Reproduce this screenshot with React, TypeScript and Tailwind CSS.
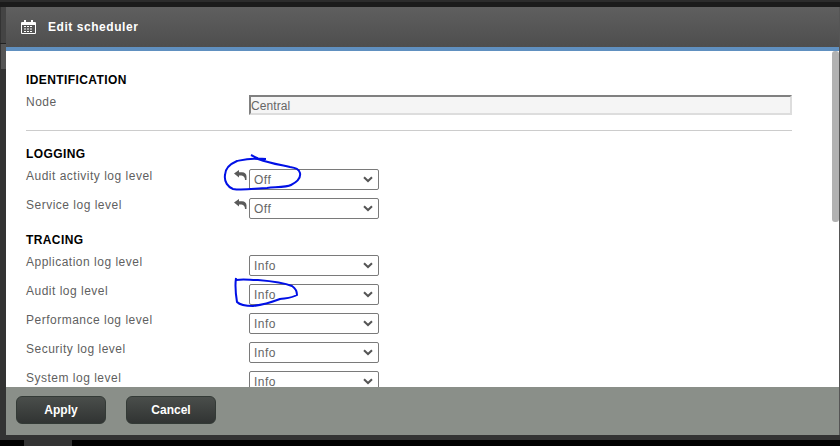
const font = "font-['Liberation_Sans',Arial,sans-serif]";

function Heading({ children, className }: { children: string; className: string }) {
  return <div className={`h-[14px] text-[12px] leading-[14px] font-bold text-black tracking-[0.4px] ${className}`}>{children}</div>;
}

function Undo() {
  return (
    <svg width="13" height="10" viewBox="0 0 13 10" className="mt-[1px] ml-[1px]">
      <path d="M0 3.6 L5 0 V2.2 H8 C10.8 2.2 12.5 4 12.5 6.4 V10 H11 C11 7.6 9.8 5.4 7.5 5.4 H5 V7.4 Z" fill="#5a5a5a" />
    </svg>
  );
}

function Row({ label, value, undo, className }: { label: string; value: string; undo?: boolean; className: string }) {
  return (
    <div className={`flex items-start h-[21px] shrink-0 ${className}`}>
      <div className="w-[207px] text-[12px] leading-[14px] text-[#5f5f5f] tracking-[0.5px]">{label}</div>
      <div className="w-[16px]">{undo && <Undo />}</div>
      <div className="w-[130px] h-[21px] flex items-center justify-between border border-[#7a7a7a] rounded-[2px] bg-white pl-[4px] pr-[5px] text-[12px] text-[#666666] tracking-[0.5px]">
        <span className="mt-[1px]">{value}</span>
        <svg width="10" height="7" viewBox="0 0 10 7">
          <path d="M1 1.2 L5 5 L9 1.2" fill="none" stroke="#555555" strokeWidth="2" />
        </svg>
      </div>
    </div>
  );
}

function Btn({ children }: { children: string }) {
  return (
    <button className="w-[90px] h-[28px] rounded-[6px] border border-[#333a36] bg-gradient-to-b from-[#4a4e4b] to-[#313433] text-white text-[12px] font-bold">
      {children}
    </button>
  );
}

export default function App() {
  return (
    <div className={`relative w-[840px] h-[446px] flex flex-col overflow-hidden bg-black ${font}`}>
      <div className="h-[2px] shrink-0 bg-[#2c2c2c]" />
      <div className="h-[5px] shrink-0 bg-[#1b1b1b]" />
      <div className="flex h-[428px] shrink-0 bg-[#333333]">
        <div className="w-[6px] shrink-0 flex flex-col">
          <div className="h-[36px] ml-[1px] bg-[#444444]" />
          <div className="h-[1px] bg-[#222222]" />
          <div className="h-[25px] ml-[1px] bg-[#555555]" />
        </div>
        <div className="relative w-[833px] shrink-0 flex flex-col">
          <div className="h-[40px] shrink-0 flex items-center bg-gradient-to-b from-[#5f5f5f] to-[#4e4e4e] pl-[15px] text-white">
            <svg width="15" height="14" viewBox="0 0 15 14" className="shrink-0">
              <path d="M0.5 2.5 H14.5 V13.5 H0.5 Z" fill="none" stroke="#fff" />
              <path d="M1 2 H14 V5 H1 Z" fill="#fff" />
              <path d="M3 0 H5 V3 H3 Z M10 0 H12 V3 H10 Z" fill="#fff" />
              <path d="M3 6.5 H12 M3 9 H12 M3 11.5 H12" stroke="#fff" strokeDasharray="2 1" />
            </svg>
            <span className="ml-[12px] text-[12px] font-bold tracking-[0.55px]">Edit scheduler</span>
          </div>
          <div className="h-[4px] shrink-0 bg-[#6090c0]" />
          <div className="relative h-[336px] shrink-0 bg-white overflow-hidden pl-[20px] pr-[47px] pt-[22px] flex flex-col">
            <Heading className="shrink-0">IDENTIFICATION</Heading>
            <div className="flex items-start mt-[8px] h-[20px] shrink-0">
              <div className="w-[223px] text-[12px] leading-[14px] text-[#5f5f5f] tracking-[0.5px]">Node</div>
              <div className="flex-1 h-[20px] flex items-center bg-[#f5f5f5] border-t-2 border-l-2 border-r-2 border-b-2 border-t-[#808080] border-l-[#808080] border-r-[#dddddd] border-b-[#dddddd] text-[12px] text-[#666666] tracking-[0.1px]">
                <span className="mt-[1px]">Central</span>
              </div>
            </div>
            <div className="h-[1px] mt-[15px] shrink-0 bg-[#cccccc]" />
            <Heading className="mt-[16px] shrink-0">LOGGING</Heading>
            <Row className="mt-[8px]" label="Audit activity log level" value="Off" undo />
            <Row className="mt-[8px]" label="Service log level" value="Off" undo />
            <Heading className="mt-[14px] shrink-0">TRACING</Heading>
            <Row className="mt-[8px]" label="Application log level" value="Info" />
            <Row className="mt-[8px]" label="Audit log level" value="Info" />
            <Row className="mt-[8px]" label="Performance log level" value="Info" />
            <Row className="mt-[8px]" label="Security log level" value="Info" />
            <Row className="mt-[8px]" label="System log level" value="Info" />
            <div className="absolute right-0 top-0 w-[7px] h-[171px] rounded-[3px] bg-[#b2b2b2]" />
          </div>
          <div className="h-[48px] shrink-0 bg-[#8a8f89] flex items-start gap-[20px] pl-[10px] pt-[9px]">
            <Btn>Apply</Btn>
            <Btn>Cancel</Btn>
          </div>
        </div>
        <div className="w-[1px] shrink-0 bg-[#555555]" />
      </div>
      <div className="h-[5px] shrink-0 bg-[#333333]" />
      <div className="h-[6px] shrink-0 bg-black pl-[24px]">
        <div className="w-[48px] h-[6px] bg-[#333333]" />
      </div>
      <svg width="840" height="446" viewBox="0 0 840 446" className="absolute inset-0 pointer-events-none">
        <path
          d="M251 155 L258 158.5 L266 159 M258 159 C250 158 242 160 237 161 C230 164 225 169 225 175 C224 182 228 187 233 189 C243 191 257 188 267 188 C278 187 287 187 291 185 C297 182 301 178 300 173 C299 169 296 168 290 167 C282 165 272 164 258 159"
          fill="none"
          stroke="#0010e6"
          strokeWidth="2"
        />
        <path
          d="M236 278 C235 285 236 296 237 302 C241 306 248 306 253 306 C262 305 272 302 280 299 C286 298 292 298 297 295 C297 291 295 288 292 286 C282 282 270 281 258 280 C250 280 243 279 236 280"
          fill="none"
          stroke="#0010e6"
          strokeWidth="2"
        />
      </svg>
    </div>
  );
}
